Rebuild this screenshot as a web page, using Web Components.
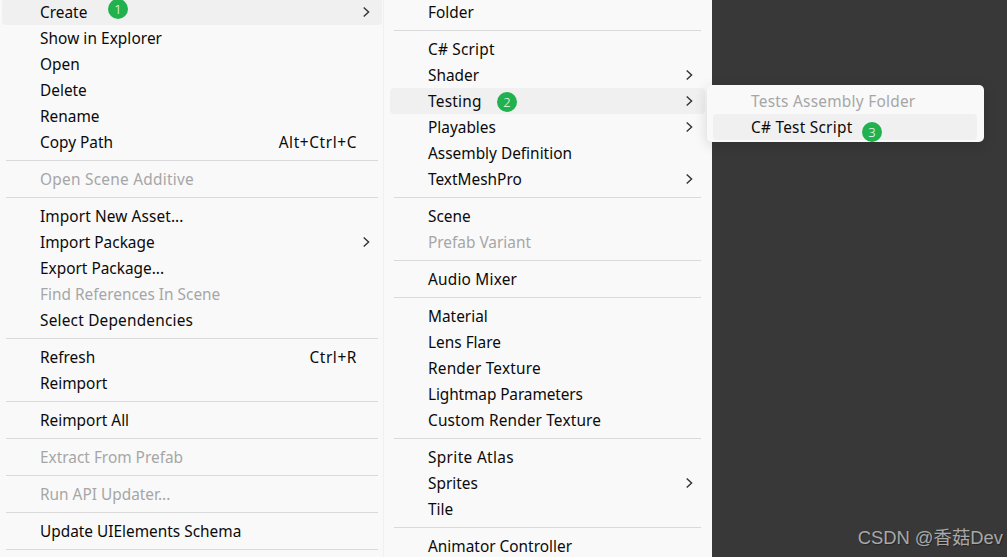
<!DOCTYPE html>
<html><head><meta charset="utf-8">
<style>
html,body{margin:0;padding:0;width:1007px;height:557px;overflow:hidden;background:#383838}
body{font-family:"Noto Sans","Noto Sans CJK SC",sans-serif}
</style></head><body>
<x-desktop>
  <x-menu style="--w:384px;--pad-l:2px;--pad-r:1px;--sep-in:4px;--text-x:38px;--arrow-r:12px;border-right:1px solid #f0f0f0">
    <x-item hot arrow>Create<x-badge slot="badge" style="left:106px;top:0">1</x-badge></x-item>
    <x-item style="letter-spacing:.06px">Show in Explorer</x-item>
    <x-item>Open</x-item>
    <x-item>Delete</x-item>
    <x-item>Rename</x-item>
    <x-item key="Alt+Ctrl+C">Copy Path</x-item>
    <x-sep></x-sep>
    <x-item disabled style="letter-spacing:.25px">Open Scene Additive</x-item>
    <x-sep></x-sep>
    <x-item style="letter-spacing:.1px">Import New Asset...</x-item>
    <x-item arrow>Import Package</x-item>
    <x-item>Export Package...</x-item>
    <x-item disabled>Find References In Scene</x-item>
    <x-item style="letter-spacing:.2px">Select Dependencies</x-item>
    <x-sep></x-sep>
    <x-item key="Ctrl+R">Refresh</x-item>
    <x-item>Reimport</x-item>
    <x-sep></x-sep>
    <x-item>Reimport All</x-item>
    <x-sep></x-sep>
    <x-item disabled>Extract From Prefab</x-item>
    <x-sep></x-sep>
    <x-item disabled>Run API Updater...</x-item>
    <x-sep></x-sep>
    <x-item>Update UIElements Schema</x-item>
    <x-sep></x-sep>
  </x-menu>
  <x-menu style="--w:328px;--pad-l:6px;--pad-r:7px;--sep-in:4px;--text-x:38px;--arrow-r:12px">
    <x-item>Folder</x-item>
    <x-sep></x-sep>
    <x-item style="letter-spacing:.2px">C# Script</x-item>
    <x-item arrow>Shader</x-item>
    <x-item hot arrow style="letter-spacing:.25px">Testing<x-badge slot="badge" style="left:107px;top:4px">2</x-badge></x-item>
    <x-item arrow>Playables</x-item>
    <x-item>Assembly Definition</x-item>
    <x-item arrow>TextMeshPro</x-item>
    <x-sep></x-sep>
    <x-item>Scene</x-item>
    <x-item disabled>Prefab Variant</x-item>
    <x-sep></x-sep>
    <x-item style="letter-spacing:.2px">Audio Mixer</x-item>
    <x-sep></x-sep>
    <x-item>Material</x-item>
    <x-item>Lens Flare</x-item>
    <x-item style="letter-spacing:.2px">Render Texture</x-item>
    <x-item style="letter-spacing:-.1px">Lightmap Parameters</x-item>
    <x-item style="letter-spacing:.15px">Custom Render Texture</x-item>
    <x-sep></x-sep>
    <x-item style="letter-spacing:.35px">Sprite Atlas</x-item>
    <x-item arrow>Sprites</x-item>
    <x-item>Tile</x-item>
    <x-sep></x-sep>
    <x-item>Animator Controller</x-item>
  </x-menu>
  <x-flyout>
    <x-item disabled>Tests Assembly Folder</x-item>
    <x-item hot>C# Test Script<x-badge slot="badge" style="left:149px;top:8px">3</x-badge></x-item>
  </x-flyout>
  <x-watermark>CSDN @香菇Dev</x-watermark>
</x-desktop>
<script>
function def(name, html){
  customElements.define(name, class extends HTMLElement{
    constructor(){super();const r=this.attachShadow({mode:'open'});r.innerHTML=html;}
  });
}
def('x-desktop',`<style>:host{display:flex;position:relative;width:1007px;height:557px;background:#383838;overflow:hidden;align-items:flex-start}</style><slot></slot>`);
def('x-menu',`<style>:host{display:block;box-sizing:border-box;width:var(--w);height:558px;margin-top:-1px;background:#f9f9f9;padding:0 var(--pad-r) 0 var(--pad-l);flex:none;overflow:hidden}</style><slot></slot>`);
def('x-sep',`<style>:host{display:block;height:11px;padding:5px var(--sep-in);box-sizing:border-box}
i{display:block;height:1px;background:#d9d9d9}</style><i></i>`);
def('x-flyout',`<style>:host{display:block;position:absolute;left:707px;top:85px;width:277px;height:57px;box-sizing:border-box;padding:3px 7px 3px 6px;background:#f9f9f9;border-radius:5px;box-shadow:0 3px 14px rgba(0,0,0,.14);--text-x:38px;--arrow-r:12px;letter-spacing:.25px}</style><slot></slot>`);
def('x-badge',`<style>:host{position:absolute;display:flex;align-items:center;justify-content:center;width:20px;height:20px;border-radius:50%;background:#22b14f;color:#f4fff4;letter-spacing:0;font:300 13px/20px "Noto Sans",sans-serif}</style><slot></slot>`);
def('x-watermark',`<style>:host{position:absolute;right:4px;top:526px;font:18.4px/24px "Liberation Sans","Noto Sans CJK SC",sans-serif;color:#a8a8a8;white-space:nowrap;text-shadow:1px 1px 1px rgba(0,0,0,.35)}</style><slot></slot>`);
customElements.define('x-item', class extends HTMLElement{
  constructor(){super();
    const r=this.attachShadow({mode:'open'});
    const k=this.getAttribute('key');
    r.innerHTML=`<style>
:host{display:flex;position:relative;align-items:center;height:26px;box-sizing:border-box;padding-left:var(--text-x);padding-right:var(--arrow-r);border-radius:4px;font-size:15.4px;line-height:26px;color:#0a0a0a;white-space:nowrap}
:host([hot]){background:#f0f0f0}
:host([disabled]){color:#a6a6a6}
.t{flex:1;padding-top:2px}
.k{margin-right:13px;padding-top:2px;letter-spacing:.6px}
svg{display:block;width:8px;height:12px}
</style><span class="t"><slot></slot></span>${k?`<span class="k">${k}</span>`:''}${this.hasAttribute('arrow')?`<svg viewBox="0 0 8 12"><path d="M1.7 1.6 6.6 6 1.7 10.4" fill="none" stroke="#333" stroke-width="1.4"/></svg>`:''}<slot name="badge"></slot>`;
  }
});
</script>
</body></html>
